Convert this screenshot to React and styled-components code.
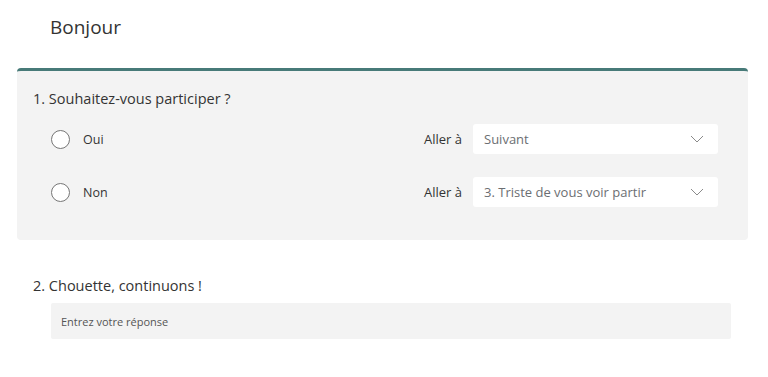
import React from 'react'
import styled, { createGlobalStyle } from 'styled-components'

const GlobalStyle = createGlobalStyle`
  html, body {
    margin: 0;
    padding: 0;
    background: #ffffff;
    font-family: "Segoe UI", "Open Sans", "Noto Sans", sans-serif;
    color: #333333;
  }
`

const Page = styled.div`
  width: 768px;
  height: 377px;
  overflow: hidden;
  padding: 0 20px 0 17px;
  box-sizing: border-box;
`

const FormTitle = styled.h1`
  margin: 0;
  padding: 14px 0 0 33px;
  height: 68px;
  box-sizing: border-box;
  font-size: 19px;
  font-weight: 400;
  color: #333333;
  line-height: 26px;
`

const QuestionCard = styled.section`
  background: ${p => (p.active ? '#f3f3f3' : 'transparent')};
  border-top: 3px solid ${p => (p.active ? '#477a78' : 'transparent')};
  border-radius: 4px;
  padding: ${p => (p.active ? '17px 30px 16px 16px' : '32px 16px 0 16px')};
  box-sizing: border-box;
  height: ${p => (p.active ? '172px' : 'auto')};
`

const QuestionTitle = styled.div`
  font-size: 14.5px;
  line-height: 22px;
  color: #333333;
  margin-bottom: ${p => p.gap || 8}px;
`

const Options = styled.div`
  display: flex;
  flex-direction: column;
  gap: 23px;
  padding-left: 18px;
`

const OptionRow = styled.div`
  display: flex;
  align-items: center;
  height: 30px;
`

const Radio = styled.span`
  width: 17px;
  height: 17px;
  border: 1.5px solid #767676;
  border-radius: 50%;
  background: #ffffff;
  flex-shrink: 0;
`

const OptionLabel = styled.span`
  margin-left: 13px;
  font-size: 12.5px;
  color: #333333;
  flex: 1;
`

const GotoLabel = styled.span`
  font-size: 13px;
  color: #333333;
  margin-right: 11px;
`

const Select = styled.div`
  width: 245px;
  height: 30px;
  background: #ffffff;
  border-radius: 3px;
  display: flex;
  align-items: center;
  justify-content: space-between;
  padding: 0 14px 0 11px;
  box-sizing: border-box;
  font-size: 13px;
  color: #6b6e72;
`

const Chevron = () => (
  <svg width="14" height="8" viewBox="0 0 14 8" fill="none">
    <path d="M1 1l6 6 6-6" stroke="#8a8a8a" strokeWidth="1" />
  </svg>
)

const AnswerInput = styled.div`
  margin-left: 18px;
  width: 680px;
  height: 36px;
  background: #f3f3f3;
  border-radius: 2px;
  display: flex;
  align-items: center;
  padding-left: 10px;
  box-sizing: border-box;
  font-size: 11px;
  color: #555555;
`

const options = [
  { label: 'Oui', target: 'Suivant' },
  { label: 'Non', target: '3. Triste de vous voir partir' },
]

export default function App() {
  return (
    <Page>
      <GlobalStyle />
      <FormTitle>Bonjour</FormTitle>
      <QuestionCard active>
        <QuestionTitle gap={14}>1. Souhaitez-vous participer ?</QuestionTitle>
        <Options>
          {options.map(o => (
            <OptionRow key={o.label}>
              <Radio />
              <OptionLabel>{o.label}</OptionLabel>
              <GotoLabel>Aller à</GotoLabel>
              <Select>
                <span>{o.target}</span>
                <Chevron />
              </Select>
            </OptionRow>
          ))}
        </Options>
      </QuestionCard>
      <QuestionCard>
        <QuestionTitle gap={6}>2. Chouette, continuons !</QuestionTitle>
        <AnswerInput>Entrez votre réponse</AnswerInput>
      </QuestionCard>
    </Page>
  )
}
